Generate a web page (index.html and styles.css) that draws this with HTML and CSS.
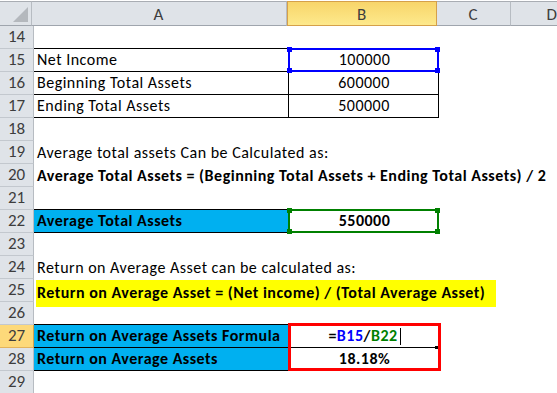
FILE: index.html
```html
<!DOCTYPE html>
<html>
<head>
<meta charset="utf-8">
<link rel="stylesheet" href="styles.css">
</head>
<body>
<div class="sheet">
  <div class="hdr">
    <div class="corner"><span class="tri"></span></div>
    <div class="ch ca">A</div>
    <div class="ch cb sel">B</div>
    <div class="ch cc">C</div>
    <div class="ch cd">D</div>
  </div>

  <div class="row"><div class="rh">14</div><div class="c ca bb"></div><div class="c cb bb"></div><div class="c cc"></div><div class="c cd"></div></div>
  <div class="row"><div class="rh">15</div><div class="c ca bb br">Net Income</div><div class="c cb bb num">100000</div><div class="c cc"></div><div class="c cd"></div></div>
  <div class="row"><div class="rh">16</div><div class="c ca bb br">Beginning Total Assets</div><div class="c cb bb br num">600000</div><div class="c cc"></div><div class="c cd"></div></div>
  <div class="row"><div class="rh">17</div><div class="c ca bb br">Ending Total Assets</div><div class="c cb bb br num">500000</div><div class="c cc"></div><div class="c cd"></div></div>
  <div class="row"><div class="rh">18</div><div class="c ca"></div><div class="c cb"></div><div class="c cc"></div><div class="c cd"></div></div>
  <div class="row"><div class="rh">19</div><div class="c ca over">Average total assets Can be Calculated as:</div></div>
  <div class="row"><div class="rh">20</div><div class="c ca over bold">Average Total Assets = (Beginning Total Assets + Ending Total Assets) / 2</div></div>
  <div class="row"><div class="rh">21</div><div class="c ca bb"></div><div class="c cb bb"></div><div class="c cc"></div><div class="c cd"></div></div>
  <div class="row"><div class="rh">22</div><div class="c ca bb br cyan bold">Average Total Assets</div><div class="c cb bb num bold">550000</div><div class="c cc"></div><div class="c cd"></div></div>
  <div class="row"><div class="rh">23</div><div class="c ca"></div></div>
  <div class="row"><div class="rh">24</div><div class="c ca over">Return on Average Asset can be calculated as:</div></div>
  <div class="row"><div class="rh">25</div><div class="c ca over"><span class="hl bold">Return on Average Asset = (Net income) / (Total Average Asset)</span></div></div>
  <div class="row"><div class="rh">26</div><div class="c ca bb"></div><div class="c cb bb"></div><div class="c cc"></div><div class="c cd"></div></div>
  <div class="row"><div class="rh active">27</div><div class="c ca bb br cyan bold">Return on Average Assets Formula</div><div class="c cb bb num bold"><span class="f-eq">=</span><span class="f-b">B15</span>/<span class="f-g">B22</span><span class="caret"></span></div><div class="c cc"></div><div class="c cd"></div></div>
  <div class="row"><div class="rh">28</div><div class="c ca bb br cyan bold">Return on Average Assets</div><div class="c cb bb num bold">18.18%</div><div class="c cc"></div><div class="c cd"></div></div>
  <div class="row"><div class="rh">29</div><div class="c ca"></div></div>

  <div class="selbox blue"><i class="h tl"></i><i class="h tr"></i><i class="h bl"></i><i class="h br2"></i></div>
  <div class="selbox green"><i class="h tl"></i><i class="h tr"></i><i class="h bl"></i><i class="h br2"></i></div>
  <div class="redbox"></div>
  <i class="dot"></i>
</div>
</body>
</html>
```

FILE: styles.css
```css
* { box-sizing: border-box; }
html, body { margin: 0; padding: 0; background: #fff; }
body {
  font-family: Carlito, Lato, "Liberation Sans", sans-serif;
  font-size: 16px;
  letter-spacing: 0.5px;
  color: #000;
  width: 557px;
  height: 393px;
  overflow: hidden;
}
.sheet { position: relative; }

.hdr {
  display: flex;
  height: 26px;
  border-top: 1px solid #fff;
}
.hdr > div {
  border-top: 1px solid #a9adb3;
  border-bottom: 1px solid #9fa5ad;
  border-right: 1px solid #b7bcc2;
  background: #dfe3e8;
  color: #3d3d3d;
  font-size: 17px;
  letter-spacing: 0;
  display: flex;
  align-items: center;
  justify-content: center;
  padding-top: 2px;
}
.corner { width: 34px; position: relative; }
.tri {
  position: absolute;
  right: 3px;
  bottom: 3px;
  width: 0; height: 0;
  border-left: 15px solid transparent;
  border-bottom: 15px solid #b4b8bd;
}
.ca { width: 255px; flex: none; }
.cb { width: 150px; flex: none; }
.cc { width: 74px; flex: none; }
.cd { flex: 1; }
.hdr > .sel {
  background: linear-gradient(#f8d56a, #fde98c);
  border: 1px solid #d5a04a;
  border-top-color: #d5a04a;
}
.hdr > .cd { justify-content: flex-start; padding-left: 36px; border-right: none; }

.row {
  display: flex;
  height: 23px;
}
.rh {
  width: 34px;
  flex: none;
  background: #dfe3e8;
  border-right: 1px solid #b7bcc2;
  border-bottom: 1px solid #c3c8ce;
  color: #3d3d3d;
  font-size: 17px;
  letter-spacing: 0;
  display: flex;
  align-items: flex-end;
  justify-content: center;
  padding-bottom: 2px;
  line-height: 18px;
}
.rh.active {
  background: #fdd97a;
  border-right-color: #d5a04a;
  border-bottom-color: #e2b35c;
}
.c {
  height: 23px;
  display: flex;
  align-items: flex-end;
  padding: 0 2px 2px 3px;
  line-height: 18px;
  white-space: nowrap;
}
.bb { border-bottom: 1px solid #000; }
.br { border-right: 1px solid #000; }
.num { justify-content: center; }
.bold { font-weight: bold; letter-spacing: 0.5px; }
.over { overflow: visible; width: auto; flex: 1; }
.cyan { background: #00b0f0; }

.hl {
  display: block;
  background: #ffff00;
  height: 27px;
  margin-bottom: -7px;
  margin-left: -1px;
  padding: 4px 2px 0 1px;
  width: 460px;
  position: relative;
  z-index: 1;
}

.f-b { color: #0000ff; }
.f-g { color: #008000; }
.caret {
  display: inline-block;
  width: 1px;
  height: 17px;
  background: #000;
  margin-left: 2px;
  align-self: flex-end;
}

.selbox { position: absolute; left: 288px; width: 151px; }
.selbox.blue { top: 48px; height: 24px; border: 2px solid #0000ff; }
.selbox.green { top: 209px; height: 24px; border: 2px solid #008000; }
.h { position: absolute; width: 5px; height: 5px; }
.blue .h { background: #0000ff; }
.green .h { background: #008000; }
.h.tl { left: -3px; top: -3px; }
.h.tr { right: -3px; top: -3px; }
.h.bl { left: -3px; bottom: -3px; }
.h.br2 { right: -3px; bottom: -3px; }

.redbox {
  position: absolute;
  left: 288px;
  top: 323px;
  width: 153px;
  height: 48px;
  border: 3px solid #ff0000;
}
.dot {
  position: absolute;
  left: 435px;
  top: 346px;
  width: 3px;
  height: 3px;
  background: #000;
}
```
